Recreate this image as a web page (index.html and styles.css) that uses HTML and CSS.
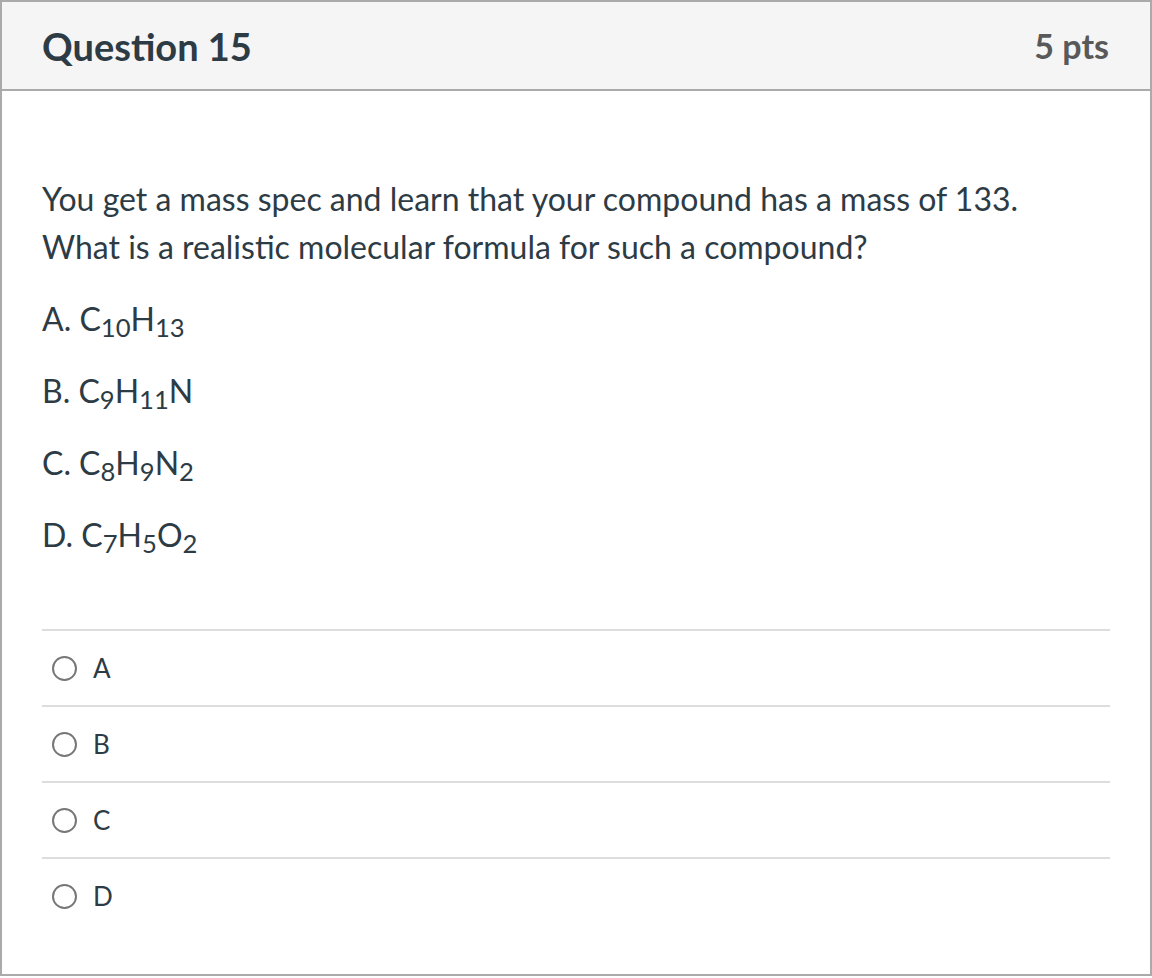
FILE: index.html
```html
<!DOCTYPE html>
<html lang="en">
<head>
    <meta charset="UTF-8">
    <meta name="viewport" content="width=device-width, initial-scale=1.0">
    <title>Question 15</title>
    <link rel="stylesheet" href="styles.css">
</head>
<body>
    <div class="question">
        <!-- Header -->
        <div class="question-header">
            <span class="question-name">Question 15</span>
            <span class="question-points">5 pts</span>
        </div>

        <!-- Body -->
        <div class="question-body">
            <p class="question-text">You get a mass spec and learn that your compound has a mass of 133.<br>What is a realistic molecular formula for such a compound?</p>
            <p class="formula">A. C<sub>10</sub>H<sub>13</sub></p>
            <p class="formula">B. C<sub>9</sub>H<sub>11</sub>N</p>
            <p class="formula">C. C<sub>8</sub>H<sub>9</sub>N<sub>2</sub></p>
            <p class="formula">D. C<sub>7</sub>H<sub>5</sub>O<sub>2</sub></p>

            <div class="answers">
                <label class="answer"><span class="radio"></span><span class="answer-label">A</span></label>
                <label class="answer"><span class="radio"></span><span class="answer-label">B</span></label>
                <label class="answer"><span class="radio"></span><span class="answer-label">C</span></label>
                <label class="answer"><span class="radio"></span><span class="answer-label">D</span></label>
            </div>
        </div>
    </div>
</body>
</html>
```

FILE: styles.css
```css
/* Base styles */
body {
    margin: 0;
    padding: 0;
    font-family: Lato, 'Open Sans', sans-serif;
    background-color: #fff;
    color: #2d3b45;
}

.question {
    box-sizing: border-box;
    width: 1152px;
    height: 976px;
    border: 2px solid #aaa;
    background: #fff;
}

/* Header */
.question-header {
    height: 87px;
    padding: 0 41px 0 40px;
    background: #f5f5f5;
    border-bottom: 2px solid #aaa;
    display: flex;
    align-items: center;
    justify-content: space-between;
}

.question-name {
    font-size: 38px;
    font-weight: bold;
    color: #2d3b45;
}

.question-points {
    font-size: 34px;
    font-weight: bold;
    color: #595959;
}

/* Body */
.question-body {
    padding: 84px 40px 0;
}

.question-text {
    margin: 0 0 24px;
    font-size: 32px;
    line-height: 48px;
}

.formula {
    margin: 0 0 24px;
    font-size: 32px;
    line-height: 48px;
}

.formula sub {
    font-size: 0.8em;
    vertical-align: -0.22em;
    line-height: 0;
}

/* Answers */
.answers {
    margin-top: 70px;
}

.answer {
    display: flex;
    align-items: center;
    height: 74px;
    border-top: 2px solid #ddd;
    cursor: pointer;
}

.radio {
    box-sizing: border-box;
    width: 25px;
    height: 25px;
    margin-left: 10px;
    margin-right: 16px;
    border: 2px solid #777;
    border-radius: 50%;
}

.answer-label {
    font-size: 26px;
}
```
